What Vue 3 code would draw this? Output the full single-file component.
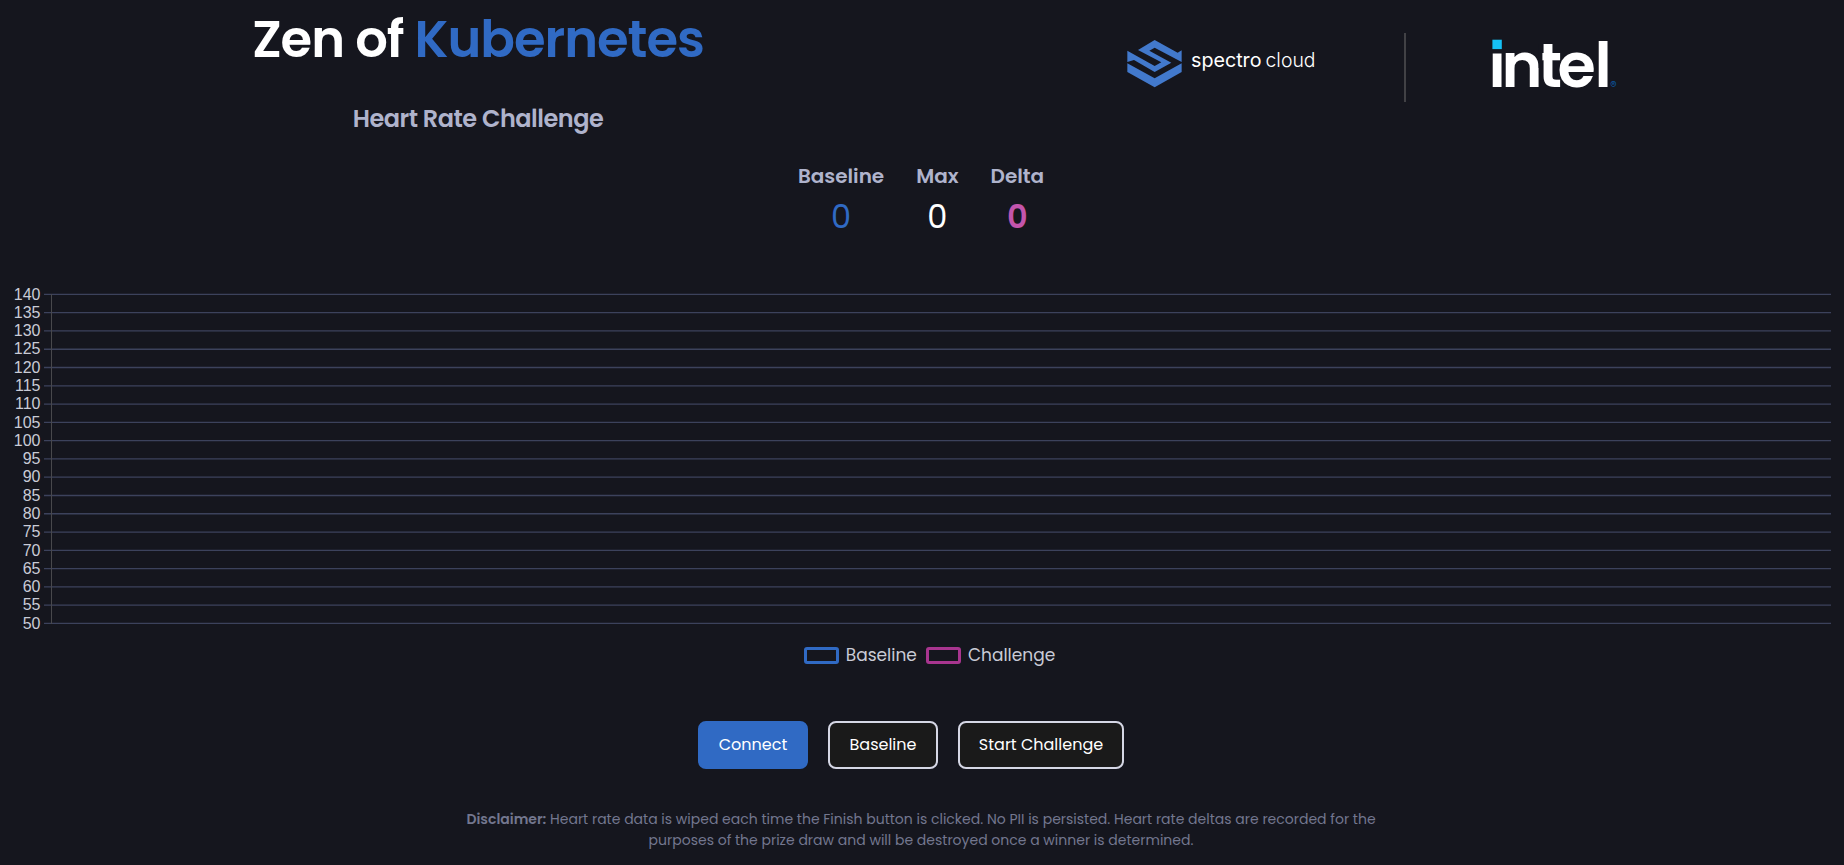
<template>
  <div class="page">
    <header class="header">
      <div class="header__titles">
        <h1 class="header__title">Zen of <span class="header__accent">Kubernetes</span></h1>
        <h2 class="header__subtitle">Heart Rate Challenge</h2>
      </div>
      <div class="header__logos">
        <svg class="spectro" viewBox="0 0 200 52" xmlns="http://www.w3.org/2000/svg">
          <g transform="translate(-17 -18) scale(0.3333)" fill="#4279cc">
            <path d="M134 60L203 98L215 91V126L134 83L118 92L184 128L134 156L72 120L52 126V92L134 138L154 127L84 90Z" />
            <path d="M52 130L134 175L215 130V156L134 202L52 156Z" />
          </g>
          <text class="spectro__name" x="64" y="29.2" textLength="70.5" lengthAdjust="spacingAndGlyphs">spectro</text>
          <text class="spectro__name spectro__name--light" x="138.5" y="29.2" textLength="50" lengthAdjust="spacingAndGlyphs">cloud</text>
        </svg>
        <div class="header__divider"></div>
        <svg class="intel" viewBox="0 0 130 56" xmlns="http://www.w3.org/2000/svg">
          <text class="intel__name" x="-3.4 9.6 46 65.5 102.4" y="51.2">intel</text>
          <rect class="intel__mask" x="-3" y="-2" width="16" height="19.5" />
          <rect class="intel__mask" x="46.6" y="8" width="3.8" height="24" />
          <rect class="intel__dot" x="0.4" y="3.7" width="9.4" height="9.4" />
          <text class="intel__mark" x="118.3" y="51.5">®</text>
        </svg>
      </div>
    </header>

    <section class="stats">
      <div v-for="stat in stats" :key="stat.label" class="stats__item">
        <span class="stats__label">{{ stat.label }}</span>
        <span class="stats__value" :class="`stats__value--${stat.type}`">{{ stat.value }}</span>
      </div>
    </section>

    <svg class="chart" viewBox="0 0 1844 358" xmlns="http://www.w3.org/2000/svg">
      <g v-for="tick in ticks" :key="tick.value">
        <line class="chart__grid" x1="44" :y1="tick.y" x2="1831" :y2="tick.y" />
        <text class="chart__tick" x="40.5" :y="tick.y + 5.2">{{ tick.value }}</text>
      </g>
      <line class="chart__axis" x1="51.5" y1="14" x2="51.5" y2="344" />
    </svg>

    <div class="legend">
      <div v-for="item in legend" :key="item.label" class="legend__item">
        <span class="legend__box" :class="`legend__box--${item.type}`"></span>
        <span class="legend__label">{{ item.label }}</span>
      </div>
    </div>

    <div class="actions">
      <button class="actions__button actions__button--connect">Connect</button>
      <button class="actions__button actions__button--baseline">Baseline</button>
      <button class="actions__button actions__button--start">Start Challenge</button>
    </div>

    <p class="disclaimer">
      <span class="disclaimer__line"><strong>Disclaimer:</strong> Heart rate data is wiped each time the Finish button is clicked. No PII is persisted. Heart rate deltas are recorded for the</span>
      <span class="disclaimer__line">purposes of the prize draw and will be destroyed once a winner is determined.</span>
    </p>
  </div>
</template>

<script setup>
import { ref, computed } from 'vue'

const MAX_RATE = 140
const MIN_RATE = 50
const STEP = 5
const STEP_HEIGHT = 18.28

const baseline = ref(0)
const max = ref(0)

const stats = computed(() => [
  { label: 'Baseline', type: 'baseline', value: baseline.value },
  { label: 'Max', type: 'max', value: max.value },
  { label: 'Delta', type: 'delta', value: max.value - baseline.value }
])

const legend = [
  { label: 'Baseline', type: 'baseline' },
  { label: 'Challenge', type: 'challenge' }
]

const ticks = computed(() => {
  const count = (MAX_RATE - MIN_RATE) / STEP + 1
  return Array.from({ length: count }, (_, i) => ({
    value: MAX_RATE - i * STEP,
    y: 14.4 + i * STEP_HEIGHT
  }))
})
</script>

<style>
body {
  margin: 0;
  background-color: #15161e;
}
</style>

<style scoped>
.page {
  height: 865px;
  overflow: hidden;
  background-color: #15161e;
  font-family: Poppins, Inter, sans-serif;
  color: #ffffff;
}

.header {
  display: flex;
  height: 150px;
}

.header__titles {
  width: 956px;
  text-align: center;
}

.header__title {
  margin: 0;
  padding-top: 1px;
  font-size: 51.2px;
  line-height: 77px;
  font-weight: 600;
  letter-spacing: -0.02em;
  white-space: nowrap;
}

.header__accent {
  color: #306ac4;
}

.header__subtitle {
  margin: 0;
  padding-top: 23px;
  font-size: 24px;
  line-height: 36px;
  font-weight: 600;
  letter-spacing: -0.02em;
  color: #afb3cc;
}

.header__logos {
  display: flex;
  align-items: flex-start;
  padding: 33px 0 0 171px;
}

.spectro {
  width: 200px;
  height: 52px;
  margin-top: 5px;
}

.spectro__name {
  font-family: Inter, sans-serif;
  font-size: 20px;
  fill: #ffffff;
}

.spectro__name--light {
  font-weight: 300;
}

.header__divider {
  width: 2px;
  height: 69px;
  margin-left: 77px;
  background-color: #414145;
}

.intel {
  width: 130px;
  height: 56px;
  margin: 3px 0 0 86px;
  overflow: visible;
}

.intel__name {
  font-family: Poppins, Inter, sans-serif;
  font-size: 62px;
  font-weight: 600;
  fill: #ffffff;
}

.intel__mask {
  fill: #15161e;
}

.intel__dot {
  fill: #15c1f6;
}

.intel__mark {
  font-family: Inter, sans-serif;
  font-size: 9.5px;
  fill: #0b539c;
}

.stats {
  display: flex;
  justify-content: center;
  gap: 32px;
  height: 130px;
  padding: 11px 2px 0 0;
  box-sizing: border-box;
}

.stats__item {
  display: flex;
  flex-direction: column;
  align-items: center;
}

.stats__label {
  font-size: 20px;
  line-height: 30px;
  font-weight: 600;
  color: #afb3cc;
}

.stats__value {
  font-size: 32px;
  line-height: 52px;
}

.stats__value--baseline {
  color: #306ac4;
}

.stats__value--delta {
  font-weight: 600;
  color: #c355ac;
}

.chart {
  display: block;
  width: 1844px;
  height: 358px;
}

.chart__grid {
  stroke: #3c425c;
  stroke-width: 1.3;
}

.chart__axis {
  stroke: #48484c;
  stroke-width: 1;
}

.chart__tick {
  font-family: 'Liberation Sans', Arial, sans-serif;
  font-size: 16px;
  text-anchor: end;
  fill: #c9cbd6;
}

.legend {
  display: flex;
  justify-content: center;
  gap: 9px;
  height: 46px;
  padding: 4px 0 0 15px;
}

.legend__item {
  display: flex;
  align-items: center;
  gap: 7px;
  height: 27px;
}

.legend__box {
  width: 35px;
  height: 17px;
  border: 3px solid;
  border-radius: 3px;
  box-sizing: border-box;
}

.legend__box--baseline {
  border-color: #306ac4;
}

.legend__box--challenge {
  border-color: #a8358f;
}

.legend__label {
  padding-bottom: 2px;
  font-size: 17px;
  color: #c9cbd6;
}

.actions {
  display: flex;
  gap: 20px;
  padding: 33px 0 0 698px;
}

.actions__button {
  height: 48px;
  padding: 0 0 2px;
  border: 2px solid #d5d7e5;
  border-radius: 8px;
  background-color: #1a1a1a;
  font-family: inherit;
  font-size: 16px;
  color: #ffffff;
  cursor: pointer;
}

.actions__button--connect {
  width: 110px;
  border-color: #306ac4;
  background-color: #306ac4;
}

.actions__button--baseline {
  width: 110px;
}

.actions__button--start {
  width: 166px;
}

.disclaimer {
  display: flex;
  flex-direction: column;
  align-items: center;
  margin: 0;
  padding: 40px 2px 0 0;
  font-size: 14px;
  line-height: 21px;
  color: #73778f;
}

.disclaimer__line {
  white-space: nowrap;
}

.disclaimer__line strong {
  font-weight: 600;
}
</style>
